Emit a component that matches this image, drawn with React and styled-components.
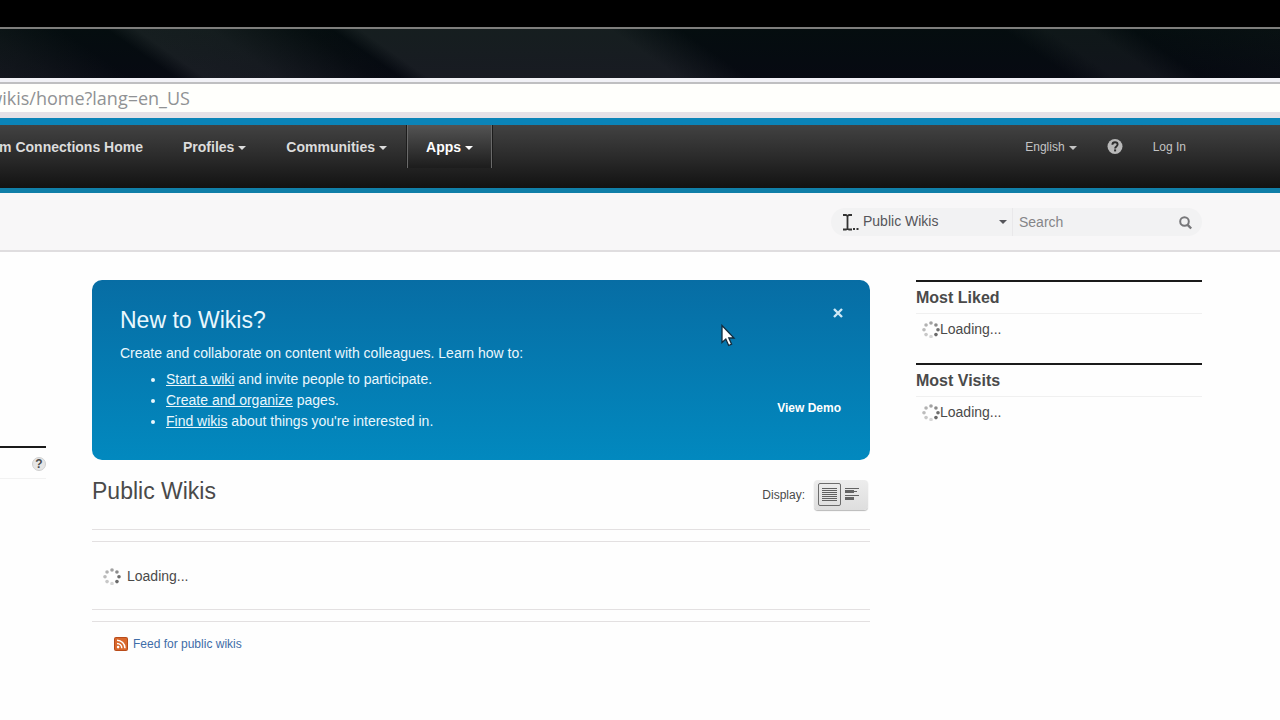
import React from "react";
import styled, { createGlobalStyle, css } from "styled-components";

const Global = createGlobalStyle`
  * { box-sizing: border-box; }
  body {
    margin: 0;
    background: #fefefe;
    color: #4a4a4a;
    font: 14px/20px "Liberation Sans", Arial, sans-serif;
    overflow-x: hidden;
  }
  button, input, select { font: inherit; color: inherit; }
  h1, h2, h3, p, ul { margin: 0; padding: 0; }
`;

const plainButton = css`
  border: 0;
  padding: 0;
  background: none;
  cursor: pointer;
`;

/* Browser frame */
const Backdrop = styled.div`
  height: 29px;
  background: #000;
  border-bottom: 2px solid #7e7e7c;
`;

const TitleBar = styled.div`
  height: 49px;
  background:
    linear-gradient(180deg, rgba(0, 20, 12, 0.25), rgba(10, 6, 24, 0.25)),
    linear-gradient(
      35deg,
      #171c20 0,
      #12171b 30px,
      #060b10 75px,
      #060b10 101px,
      #1d2226 118px,
      #1b2024 160px,
      #080d11 215px,
      #060b10 230px,
      #1d2226 246px,
      #1d2226 390px,
      #060b10 430px,
      #060b10 615px,
      #14191d 640px,
      #14191d 665px,
      #060b10 690px,
      #0b1014 100%
    );
`;

const AddressBar = styled.div`
  border-top: 4px solid #f1f1f6;
  border-bottom: 6px solid #e5e1e7;
  background: #e5e1e7;
`;

const AddressField = styled.div`
  height: 30px;
  border-top: 2px solid #bfbfc1;
  background: #fffffc;
  color: #909294;
  font: 18px/28px "Open Sans", "Noto Sans", sans-serif;
  white-space: nowrap;
`;

const AddressClip = styled.div`
  display: flex;
  justify-content: flex-end;
  width: 190px;
  overflow: hidden;
`;

/* Site header */
const Header = styled.header`
  display: flex;
  justify-content: space-between;
  height: 75px;
  border-top: 7px solid #0b84b8;
  border-bottom: 5px solid #107fa8;
  background: linear-gradient(#424242, #2b2b2b 50%, #121212);
`;

const NavList = styled.nav`
  display: flex;
  height: 43px;
`;

const navItem = css`
  display: flex;
  align-items: center;
  gap: 4px;
  padding: 0 20px;
  color: #dcdcdc;
  font-size: 14px;
  font-weight: bold;
  line-height: 20px;
  white-space: nowrap;
  text-decoration: none;
`;

const NavLink = styled.a`
  ${navItem}
  width: 163px;
  padding-left: 0;
  justify-content: flex-end;
  overflow: hidden;
`;

const NavButton = styled.button`
  ${plainButton}
  ${navItem}
  ${(p) =>
    p.$active &&
    css`
      padding: 0 18px;
      color: #fff;
      border: solid #6a6a6a;
      border-width: 0 1px;
      box-shadow: -1px 0 #1c1c1c, 1px 0 #1c1c1c;
      background: linear-gradient(#545454, #1c1c1c);
    `}
`;

const Caret = styled.span`
  width: 0;
  height: 0;
  margin-top: 2px;
  border: 4px solid transparent;
  border-top-color: currentColor;
  border-bottom-width: 0;
`;

const UserTools = styled.div`
  display: flex;
  align-items: center;
  gap: 30px;
  height: 43px;
  padding-right: 94px;
  color: #c4c4c4;
  font-size: 12px;
`;

const ToolButton = styled.button`
  ${plainButton}
  display: flex;
  align-items: center;
  gap: 4px;
`;

const ToolLink = styled.a`
  color: inherit;
  text-decoration: none;
`;

/* Search strip */
const SearchStrip = styled.div`
  display: flex;
  justify-content: flex-end;
  padding: 15px 78px 14px 0;
  border-bottom: 2px solid #dfdddf;
  background: #f8f7f8;
`;

const SearchBox = styled.form`
  position: relative;
  display: flex;
  align-items: center;
  width: 371px;
  height: 28px;
  border-radius: 14px;
  background: #f2f2f3;
`;

const ScopeField = styled.div`
  display: flex;
  align-items: center;
  width: 182px;
  height: 28px;
  padding: 0 5px 3px 0;
  border-right: 1px solid #e9e8ea;
  color: #55555a;
`;

const ScopeSelect = styled.select`
  appearance: none;
  flex: 1;
  height: 20px;
  padding: 0 0 0 32px;
  border: 0;
  background: none;
`;

const SearchInput = styled.input`
  flex: 1;
  min-width: 0;
  height: 20px;
  padding: 0 6px;
  border: 0;
  background: none;
  &::placeholder {
    color: #858588;
    opacity: 1;
  }
`;

const SearchButton = styled.button`
  ${plainButton}
  display: flex;
  padding-right: 9px;
`;

const TextCursor = styled.svg`
  position: absolute;
  left: 10px;
  top: 6px;
`;

/* Page body */
const Page = styled.div`
  display: flex;
  align-items: flex-start;
  gap: 46px;
  padding: 28px 78px 0 0;
`;

const LeftRail = styled.aside`
  width: 46px;
  margin-top: 166px;
  border-top: 2px solid #1a1a1a;
`;

const RailHeading = styled.div`
  display: flex;
  justify-content: flex-end;
  height: 31px;
  padding-top: 9px;
  border-bottom: 1px solid #f2f2f2;
`;

const HelpButton = styled.button`
  ${plainButton}
  width: 14px;
  height: 14px;
  border: 1px solid #cfcfcf;
  border-radius: 7px;
  background: #e6e6e6;
  color: #4c4c4c;
  font-size: 12px;
  font-weight: bold;
  line-height: 12px;
`;

const Main = styled.main`
  flex: 1;
  min-width: 0;
`;

const Banner = styled.section`
  position: relative;
  display: flex;
  justify-content: space-between;
  height: 180px;
  padding: 24px 27px 24px 28px;
  border-radius: 10px;
  background: linear-gradient(#076da4, #0289bf);
  color: #eaf7fd;
`;

const BannerTitle = styled.h2`
  margin-bottom: 7px;
  font-size: 23px;
  font-weight: normal;
  line-height: 32px;
`;

const BannerText = styled.p`
  margin-bottom: 6px;
`;

const BannerList = styled.ul`
  padding-left: 46px;
  line-height: 21px;
`;

const BannerLink = styled.a`
  color: inherit;
`;

const BannerActions = styled.div`
  display: flex;
  flex-direction: column;
  align-items: flex-end;
  justify-content: space-between;
  padding: 4px 0 18px;
`;

const CloseButton = styled.button`
  ${plainButton}
  display: flex;
`;

const DemoLink = styled.a`
  padding-right: 2px;
  color: #fff;
  font-size: 12px;
  font-weight: bold;
  text-decoration: none;
`;

const Pointer = styled.svg`
  position: absolute;
  right: 134px;
  top: 44px;
`;

const ListHeader = styled.div`
  display: flex;
  align-items: center;
  justify-content: space-between;
  height: 70px;
  padding-right: 2px;
  border-bottom: 1px solid #e3e0e1;
`;

const PageTitle = styled.h1`
  padding-bottom: 8px;
  font-size: 23px;
  font-weight: normal;
  line-height: 32px;
`;

const DisplayTools = styled.div`
  display: flex;
  align-items: center;
  gap: 9px;
  font-size: 12px;
`;

const ViewSwitch = styled.div`
  display: flex;
  align-items: center;
  height: 30px;
  padding: 0 4px;
  border-radius: 4px;
  background: linear-gradient(#ededed, #dedede);
  box-shadow: 0 1px 1px #b8b8b8;
`;

const ViewButton = styled.button`
  ${plainButton}
  display: flex;
  align-items: center;
  justify-content: center;
  width: 23px;
  height: 23px;
  border-radius: 2px;
  border: 1px solid ${(p) => (p.$selected ? "#6c6c6c" : "transparent")};
`;

const ListBody = styled.div`
  display: flex;
  align-items: center;
  height: 69px;
  margin-top: 11px;
  padding-left: 11px;
  border: solid #e3e0e1;
  border-width: 1px 0;
`;

const Loading = styled.div`
  display: flex;
  align-items: center;
  gap: ${(p) => (p.$tight ? 0 : 6)}px;
`;

const FeedBar = styled.footer`
  margin-top: 11px;
  padding: 12px 22px;
  border-top: 1px solid #e3e0e1;
`;

const FeedLink = styled.a`
  display: inline-flex;
  align-items: center;
  gap: 5px;
  color: #3f6da8;
  font-size: 12px;
  text-decoration: none;
`;

const RightRail = styled.aside`
  display: flex;
  flex-direction: column;
  gap: 23px;
  width: 286px;
`;

const Widget = styled.section`
  border-top: 2px solid #1a1a1a;
`;

const WidgetTitle = styled.h3`
  padding: 6px 0 5px;
  border-bottom: 1px solid #f0f0f0;
  font-size: 16px;
  font-weight: bold;
  line-height: 20px;
`;

const WidgetBody = styled.div`
  padding: 5px 0 1px 6px;
`;

const DOTS = ["#a2a2a2", "#8a8a8a", "#6e6e6e", "#6a6a6a", "#d6d6d6", "#c8c8c8", "#bcbcbc", "#b2b2b2"];

function Spinner() {
  return (
    <svg width="18" height="18" viewBox="0 0 18 18" aria-hidden="true">
      {DOTS.map((fill, i) => {
        const a = (i * Math.PI) / 4;
        return <circle key={i} cx={9 + 7 * Math.sin(a)} cy={9.8 - 6.8 * Math.cos(a)} r="1.8" fill={fill} />;
      })}
    </svg>
  );
}

function LoadingNote({ tight }) {
  return (
    <Loading $tight={tight} role="status">
      <Spinner />
      <span>Loading...</span>
    </Loading>
  );
}

function HelpIcon() {
  return (
    <svg width="16" height="16" viewBox="0 0 16 16" aria-hidden="true">
      <circle cx="8" cy="7.500" r="7.500" fill="#b9b9b9" />
      <path d="M5.4 5.7C5.4 4 6.500 3.200 8 3.200s2.600.9 2.600 2.300c0 1.900-2.500 1.900-2.500 3.900" fill="none" stroke="#2e2e2e" strokeWidth="1.9" />
      <rect x="7.1" y="10.400" width="2" height="2" fill="#2e2e2e" />
    </svg>
  );
}

function FeedIcon() {
  return (
    <svg width="14" height="14" viewBox="0 0 14 14" aria-hidden="true">
      <rect width="14" height="14" rx="2" fill="#b94c1a" />
      <rect x="1" y="1" width="12" height="12" rx="1" fill="#d9682c" />
      <path d="M3 6.4a4.8 4.8 0 0 1 4.8 4.8M3 3.2a8 8 0 0 1 8 8" fill="none" stroke="#fff" strokeWidth="1.5" />
      <circle cx="4.1" cy="10.1" r="1.3" fill="#fff" />
    </svg>
  );
}

export default function App() {
  return (
    <>
      <Global />
      <Backdrop />
      <TitleBar />
      <AddressBar>
        <AddressField>
          <AddressClip>wikis/home?lang=en_US</AddressClip>
        </AddressField>
      </AddressBar>

      <Header>
        <NavList>
          <NavLink href="#home">om Connections Home</NavLink>
          <NavButton>Profiles <Caret /></NavButton>
          <NavButton>Communities <Caret /></NavButton>
          <NavButton $active>Apps <Caret /></NavButton>
        </NavList>
        <UserTools>
          <ToolButton>English <Caret /></ToolButton>
          <ToolButton aria-label="Help"><HelpIcon /></ToolButton>
          <ToolLink href="#login">Log In</ToolLink>
        </UserTools>
      </Header>

      <SearchStrip>
        <SearchBox>
          <ScopeField>
            <ScopeSelect aria-label="Search scope">
              <option>Public Wikis</option>
            </ScopeSelect>
            <Caret />
          </ScopeField>
          <SearchInput aria-label="Search" placeholder="Search" />
          <SearchButton type="button" aria-label="Run search">
            <svg width="15" height="15" viewBox="0 0 15 15" fill="none" stroke="#77777a">
              <circle cx="6.5" cy="6.5" r="4.3" strokeWidth="2" />
              <path d="M9.6 9.8 13.2 13.500" strokeWidth="2.4" />
            </svg>
          </SearchButton>
          <TextCursor width="18" height="18" viewBox="0 0 18 18" aria-hidden="true">
            <path d="M2 1H5L6.5 2 8 1H11M6.5 2V14.5M2 15.500H5L6.5 14.500 8 15.500H11" fill="none" stroke="#333" strokeWidth="1.8" />
            <path d="M12 14h2v2h-2zM15.500 14h2v2h-2z" fill="#333" />
          </TextCursor>
        </SearchBox>
      </SearchStrip>

      <Page>
        <LeftRail>
          <RailHeading>
            <HelpButton aria-label="Help for this section">?</HelpButton>
          </RailHeading>
        </LeftRail>

        <Main>
          <Banner>
            <div>
              <BannerTitle>New to Wikis?</BannerTitle>
              <BannerText>Create and collaborate on content with colleagues. Learn how to:</BannerText>
              <BannerList>
                <li><BannerLink href="#start">Start a wiki</BannerLink> and invite people to participate.</li>
                <li><BannerLink href="#create">Create and organize</BannerLink> pages.</li>
                <li><BannerLink href="#find">Find wikis</BannerLink> about things you're interested in.</li>
              </BannerList>
            </div>
            <BannerActions>
              <CloseButton aria-label="Close">
                <svg width="10" height="10" viewBox="0 0 10 10" stroke="#cfe9f6" strokeWidth="2.4">
                  <path d="M1 1 9 9M9 1 1 9" />
                </svg>
              </CloseButton>
              <DemoLink href="#demo">View Demo</DemoLink>
            </BannerActions>
            <Pointer width="16" height="24" viewBox="0 0 16 24" aria-hidden="true">
              <path d="M2 1.500V18.500L5.800 15 8.700 21.500 11.600 20.200 8.800 14H14Z" fill="#fff" stroke="#122b3c" strokeWidth="1.3" />
            </Pointer>
          </Banner>

          <ListHeader>
            <PageTitle>Public Wikis</PageTitle>
            <DisplayTools>
              <span>Display:</span>
              <ViewSwitch>
                <ViewButton $selected aria-label="List view">
                  <svg width="15" height="14" viewBox="0 0 15 14" stroke="#606060">
                    <path d="M0 0.500H15M0 2.500H15M0 4.500H15M0 6.500H15M0 8.500H15M0 10.500H15M0 12.500H15" />
                  </svg>
                </ViewButton>
                <ViewButton aria-label="Detail view">
                  <svg width="15" height="14" viewBox="0 0 15 14" fill="#636363">
                    <path d="M0 2h9v3H0zM0 9h9v3H0zM0 0h14v1H0zM9 3h3v1H9zM0 7h14v1H0z" />
                  </svg>
                </ViewButton>
              </ViewSwitch>
            </DisplayTools>
          </ListHeader>

          <ListBody>
            <LoadingNote />
          </ListBody>

          <FeedBar>
            <FeedLink href="#feed"><FeedIcon />Feed for public wikis</FeedLink>
          </FeedBar>
        </Main>

        <RightRail>
          {["Most Liked", "Most Visits"].map((title) => (
            <Widget key={title}>
              <WidgetTitle>{title}</WidgetTitle>
              <WidgetBody>
                <LoadingNote tight />
              </WidgetBody>
            </Widget>
          ))}
        </RightRail>
      </Page>
    </>
  );
}
